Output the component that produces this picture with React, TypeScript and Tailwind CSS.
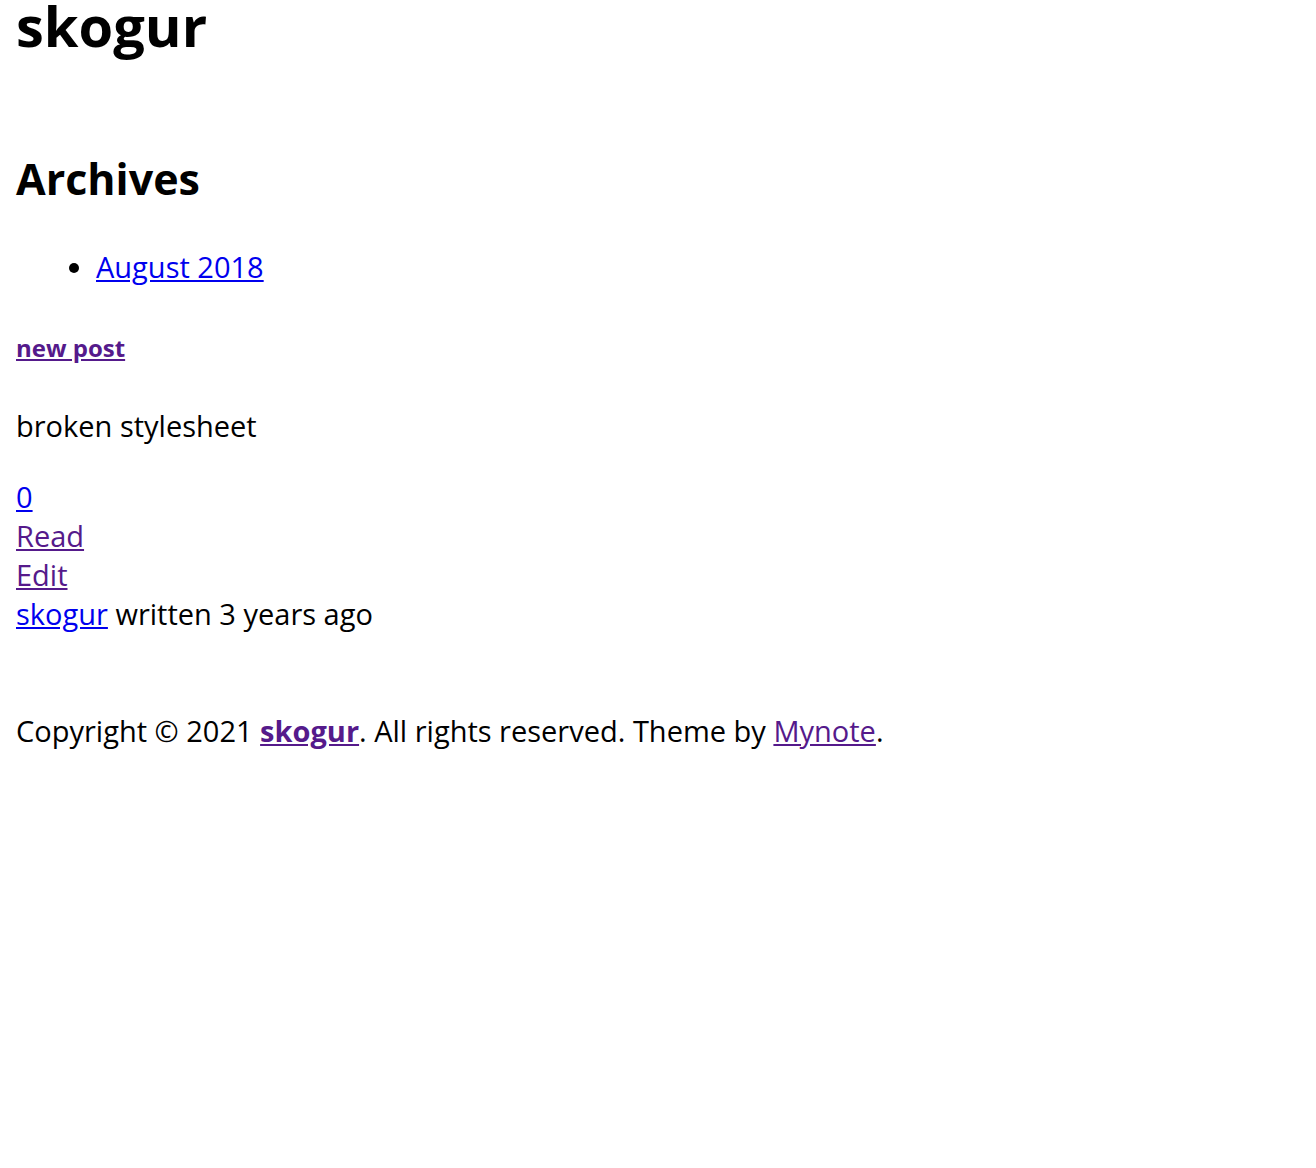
export default function App() {
  return (
    <div className="min-h-screen bg-white px-4 font-['Open_Sans',sans-serif] text-[29px] leading-[39px] text-black">
      <h1 className="text-[56px] font-bold leading-[51px]">skogur</h1>

      <h2 className="mt-[104px] text-[43px] font-bold leading-[47px]">Archives</h2>
      <ul className="mt-[45px] list-disc pl-[80px]">
        <li>
          <a href="#" className="text-[#0000ee] underline">
            August 2018
          </a>
        </li>
      </ul>

      <h4 className="mt-[45px] text-[24px] font-bold leading-[33px]">
        <a href="#" className="text-[#551a8b] underline">
          new post
        </a>
      </h4>
      <p className="mt-[42px]">broken stylesheet</p>

      <div className="mt-[32px]">
        <div>
          <a href="#" className="text-[#0000ee] underline">
            0
          </a>
        </div>
        <div>
          <a href="#" className="text-[#551a8b] underline">
            Read
          </a>
        </div>
        <div>
          <a href="#" className="text-[#551a8b] underline">
            Edit
          </a>
        </div>
        <div>
          <a href="#" className="text-[#0000ee] underline">
            skogur
          </a>{" "}
          written 3 years ago
        </div>
      </div>

      <footer className="mt-[78px]">
        Copyright © 2021{" "}
        <a href="#" className="font-bold text-[#551a8b] underline">
          skogur
        </a>
        . All rights reserved. Theme by{" "}
        <a href="#" className="text-[#551a8b] underline">
          Mynote
        </a>
        .
      </footer>
    </div>
  );
}
